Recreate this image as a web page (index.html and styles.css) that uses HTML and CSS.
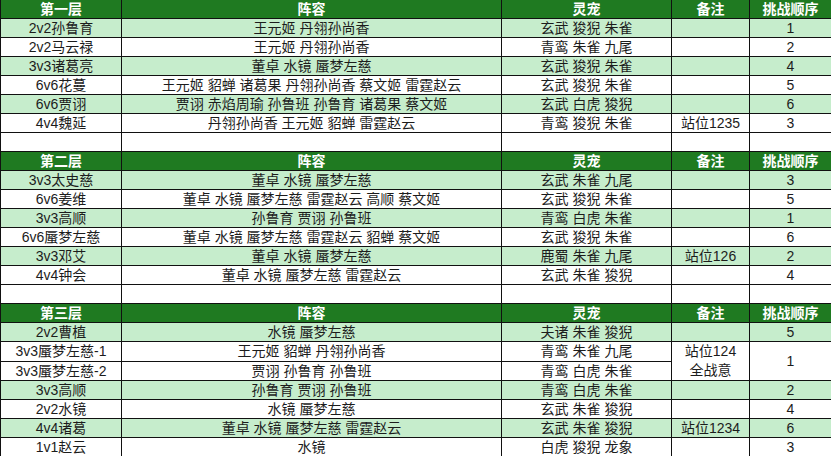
FILE: index.html
```html
<!DOCTYPE html>
<html lang="zh">
<head>
<meta charset="utf-8">
<link rel="stylesheet" href="styles.css">
</head>
<body>
<table class="sheet">
<colgroup>
<col class="c1"><col class="c2"><col class="c3"><col class="c4"><col class="c5">
</colgroup>
<tbody>
<tr class="head first"><td>第一层</td><td>阵容</td><td>灵宠</td><td>备注</td><td>挑战顺序</td></tr>
<tr class="g"><td>2v2孙鲁育</td><td>王元姬 丹翎孙尚香</td><td>玄武 狻猊 朱雀</td><td></td><td>1</td></tr>
<tr><td>2v2马云禄</td><td>王元姬 丹翎孙尚香</td><td>青鸾 朱雀 九尾</td><td></td><td>2</td></tr>
<tr class="g"><td>3v3诸葛亮</td><td>董卓 水镜 蜃梦左慈</td><td>玄武 狻猊 朱雀</td><td></td><td>4</td></tr>
<tr><td>6v6花蔓</td><td>王元姬 貂蝉 诸葛果 丹翎孙尚香 蔡文姬 雷霆赵云</td><td>玄武 狻猊 朱雀</td><td></td><td>5</td></tr>
<tr class="g"><td>6v6贾诩</td><td>贾诩 赤焰周瑜 孙鲁班 孙鲁育 诸葛果 蔡文姬</td><td>玄武 白虎 狻猊</td><td></td><td>6</td></tr>
<tr><td>4v4魏延</td><td>丹翎孙尚香 王元姬 貂蝉 雷霆赵云</td><td>青鸾 狻猊 朱雀</td><td>站位1235</td><td>3</td></tr>
<tr class="blank"><td></td><td></td><td></td><td></td><td></td></tr>
<tr class="head"><td>第二层</td><td>阵容</td><td>灵宠</td><td>备注</td><td>挑战顺序</td></tr>
<tr class="g"><td>3v3太史慈</td><td>董卓 水镜 蜃梦左慈</td><td>玄武 朱雀 九尾</td><td></td><td>3</td></tr>
<tr><td>6v6姜维</td><td>董卓 水镜 蜃梦左慈 雷霆赵云 高顺 蔡文姬</td><td>玄武 狻猊 朱雀</td><td></td><td>5</td></tr>
<tr class="g"><td>3v3高顺</td><td>孙鲁育 贾诩 孙鲁班</td><td>青鸾 白虎 朱雀</td><td></td><td>1</td></tr>
<tr><td>6v6蜃梦左慈</td><td>董卓 水镜 蜃梦左慈 雷霆赵云 貂蝉 蔡文姬</td><td>玄武 狻猊 朱雀</td><td></td><td>6</td></tr>
<tr class="g"><td>3v3邓艾</td><td>董卓 水镜 蜃梦左慈</td><td>鹿蜀 朱雀 九尾</td><td>站位126</td><td>2</td></tr>
<tr><td>4v4钟会</td><td>董卓 水镜 蜃梦左慈 雷霆赵云</td><td>玄武 朱雀 狻猊</td><td></td><td>4</td></tr>
<tr class="blank"><td></td><td></td><td></td><td></td><td></td></tr>
<tr class="head"><td>第三层</td><td>阵容</td><td>灵宠</td><td>备注</td><td>挑战顺序</td></tr>
<tr class="g"><td>2v2曹植</td><td>水镜 蜃梦左慈</td><td>夫诸 朱雀 狻猊</td><td></td><td>5</td></tr>
<tr><td>3v3蜃梦左慈-1</td><td>王元姬 貂蝉 丹翎孙尚香</td><td>青鸾 朱雀 九尾</td><td rowspan="2" class="two">站位124<br>全战意</td><td rowspan="2">1</td></tr>
<tr><td>3v3蜃梦左慈-2</td><td>贾诩 孙鲁育 孙鲁班</td><td>青鸾 白虎 朱雀</td></tr>
<tr class="g"><td>3v3高顺</td><td>孙鲁育 贾诩 孙鲁班</td><td>青鸾 白虎 朱雀</td><td></td><td>2</td></tr>
<tr><td>2v2水镜</td><td>水镜 蜃梦左慈</td><td>玄武 朱雀 狻猊</td><td></td><td>4</td></tr>
<tr class="g"><td>4v4诸葛</td><td>董卓 水镜 蜃梦左慈 雷霆赵云</td><td>玄武 朱雀 狻猊</td><td>站位1234</td><td>6</td></tr>
<tr><td>1v1赵云</td><td>水镜</td><td>白虎 狻猊 龙象</td><td></td><td>3</td></tr>
</tbody>
</table>
</body>
</html>
```

FILE: styles.css
```css
html, body {
  margin: 0;
  padding: 0;
  background: #ffffff;
}

.sheet {
  width: 831px;
  border-collapse: collapse;
  table-layout: fixed;
  font-family: "Liberation Sans", "Noto Sans CJK SC", sans-serif;
  font-size: 14px;
  color: #1c1c1c;
}

.c1 { width: 121px; }
.c2 { width: 380px; }
.c3 { width: 170px; }
.c4 { width: 78px; }
.c5 { width: 82px; }

.sheet td {
  border: 1px solid #111111;
  height: 18px;
  padding: 0;
  line-height: 18px;
  text-align: center;
  white-space: nowrap;
  overflow: hidden;
}

.sheet tr.first td {
  border-top: none;
}

.sheet tr.g td {
  background: #c6edcc;
}

.sheet tr.head td {
  background: #1f7a21;
  color: #ffffff;
  font-weight: bold;
  font-size: 14px;
}

.sheet td.two {
  line-height: 19px;
}
```
